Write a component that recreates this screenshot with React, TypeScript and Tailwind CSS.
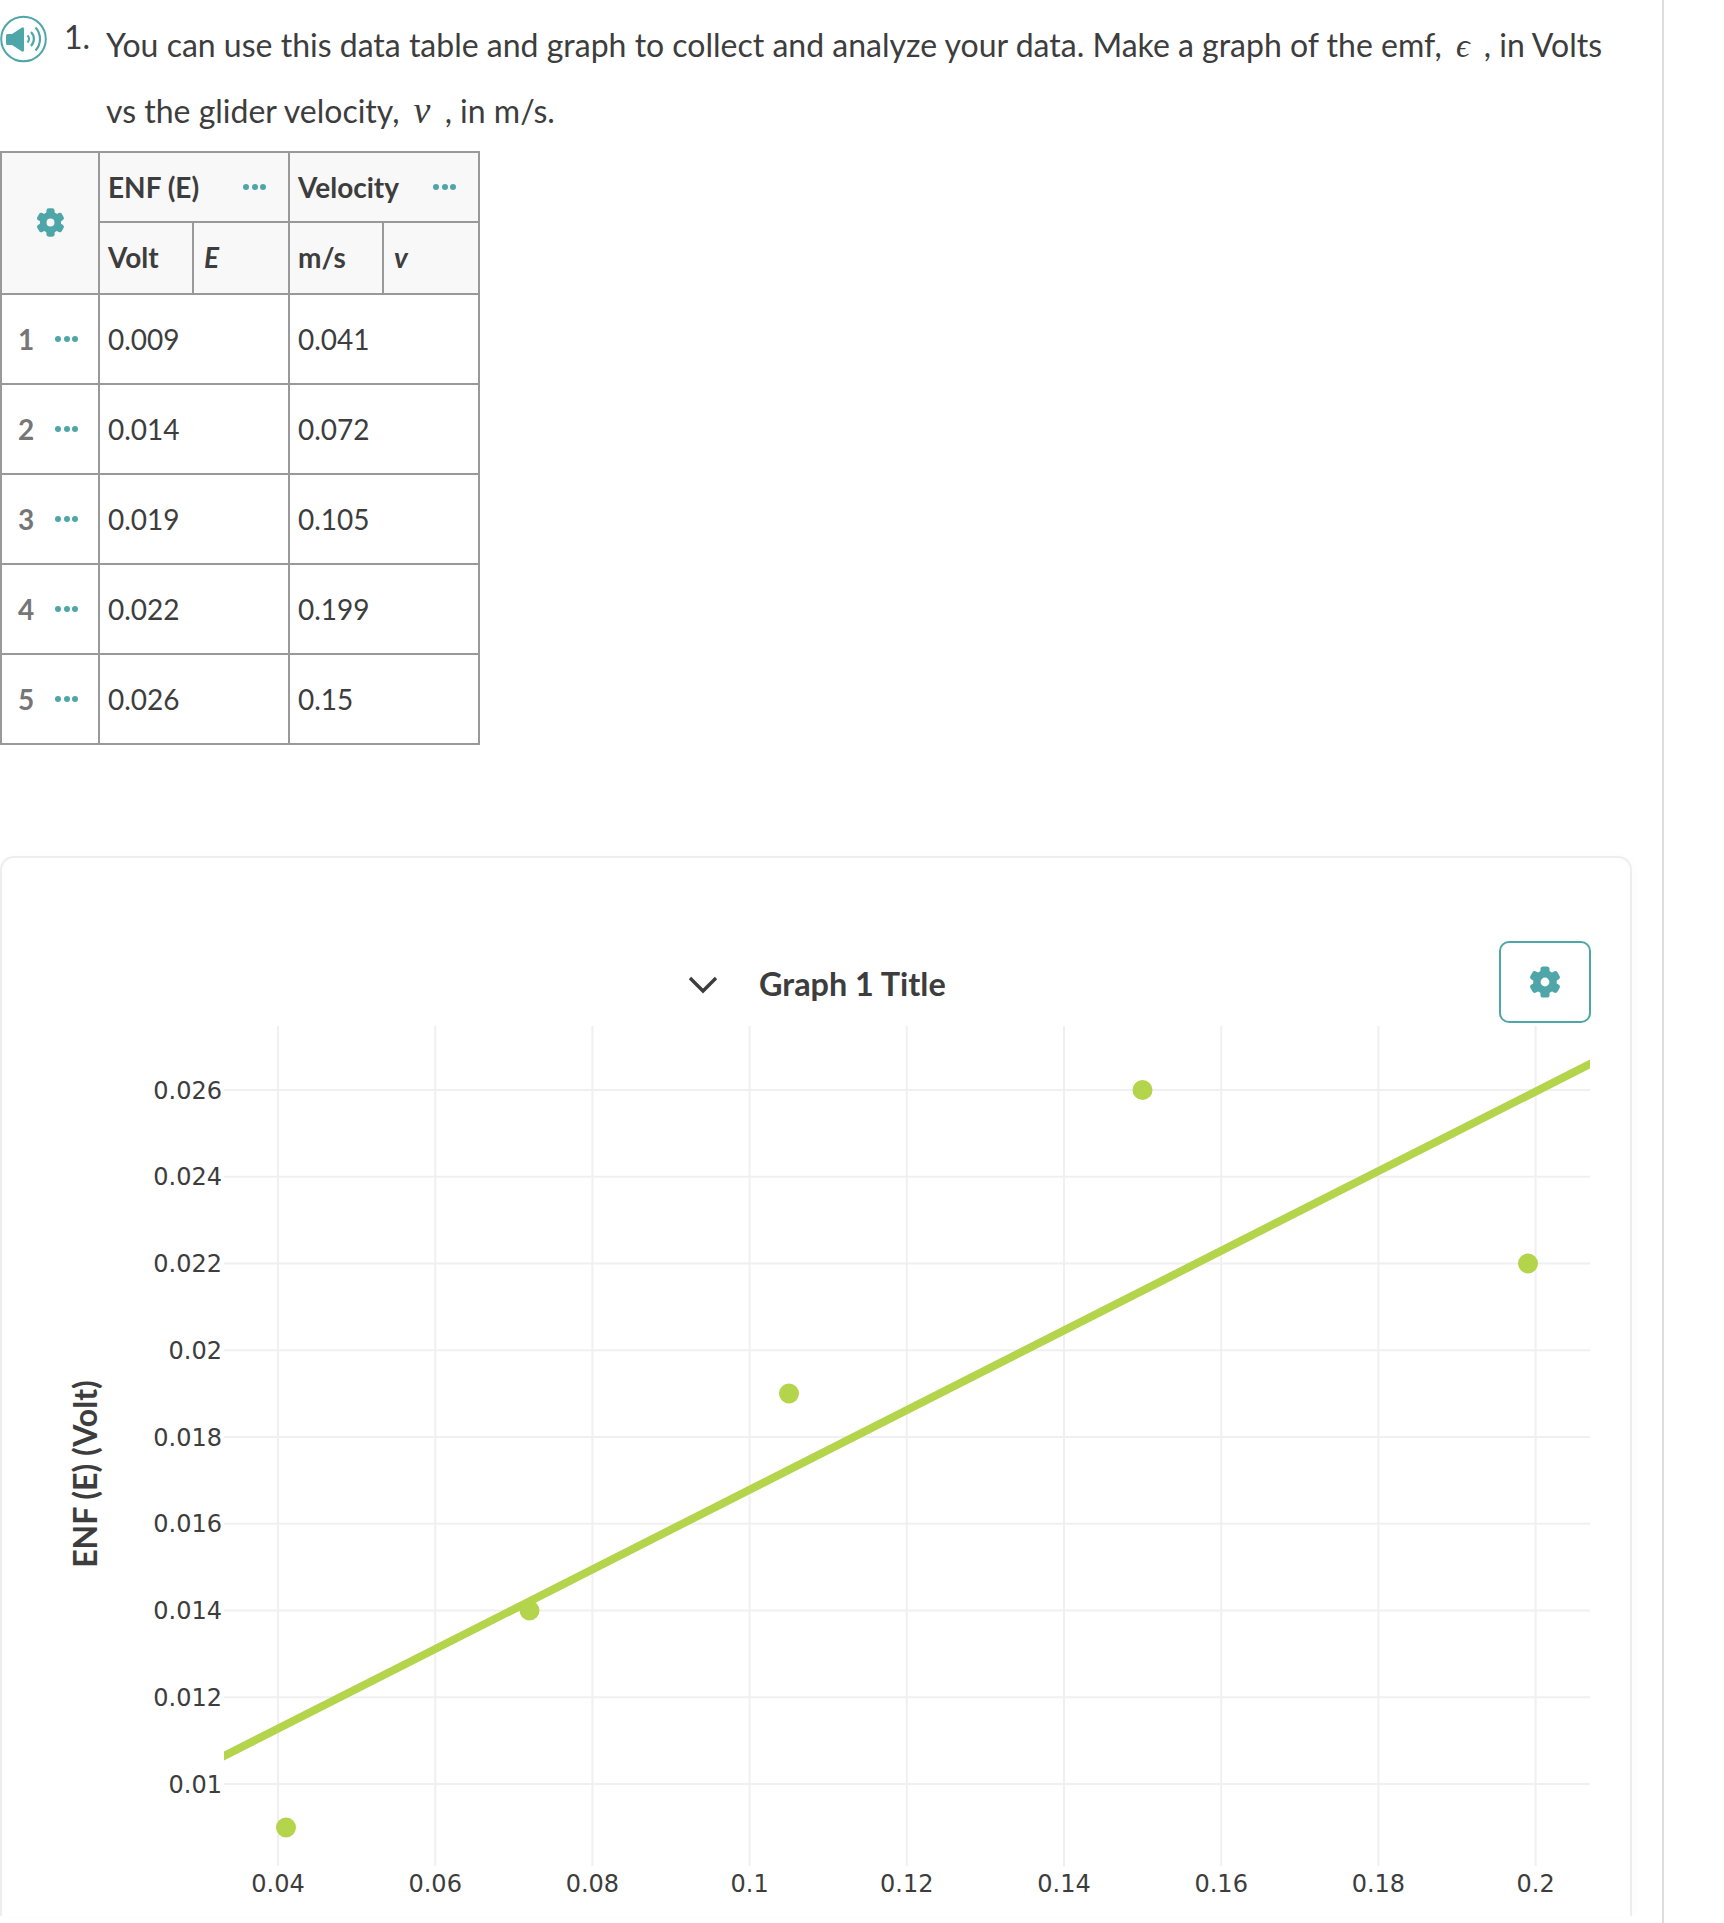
import React from "react";

const teal = "#4fa6a8";
const ink = "#3d3d3d";
const lime = "#b3d44b";

function Gear({ size }: { size: number }) {
  const teeth = [0, 60, 120, 180, 240, 300];
  return (
    <svg width={size} height={size} viewBox="0 0 24 24" className="block">
      <g fill={teal}>
        {teeth.map((a) => (
          <rect key={a} x="8.6" y="0.3" width="6.8" height="7" rx="2" transform={`rotate(${a} 12 12)`} />
        ))}
        <path fillRule="evenodd" d="M12 3.2a8.8 8.8 0 1 0 0 17.6a8.8 8.8 0 1 0 0-17.6zM12 8.7a3.3 3.3 0 1 1 0 6.6a3.3 3.3 0 1 1 0-6.6z" />
      </g>
    </svg>
  );
}

function Dots() {
  return (
    <span className="flex gap-[2.5px]">
      <span className="h-[6px] w-[6px] rounded-full bg-[#4fa6a8]" />
      <span className="h-[6px] w-[6px] rounded-full bg-[#4fa6a8]" />
      <span className="h-[6px] w-[6px] rounded-full bg-[#4fa6a8]" />
    </span>
  );
}

function Speaker() {
  return (
    <svg width="48" height="48" viewBox="0 0 48 48" className="block">
      <circle cx="23.5" cy="24" r="22.3" fill="none" stroke={teal} strokeWidth="2" />
      <path d="M6 20.5q0-1.5 1.5-1.5H12L22 12.5q2-1 2 1.5v21q0 2.5-2 1.500L12 30H7.500q-1.500 0-1.500-1.500z" fill={teal} />
      <g fill="none" stroke={teal} strokeWidth="2.2">
        <path d="M27.500 20.500a5 5 0 0 1 0 7" />
        <path d="M31 17a10 10 0 0 1 0 14" />
        <path d="M35.500 12.500a17 17 0 0 1 0 23" />
      </g>
    </svg>
  );
}

const rows = [
  ["1", "0.009", "0.041"],
  ["2", "0.014", "0.072"],
  ["3", "0.019", "0.105"],
  ["4", "0.022", "0.199"],
  ["5", "0.026", "0.15"],
];

const gridX = [
  ["0.04", 278], ["0.06", 435.2], ["0.08", 592.4], ["0.1", 749.6], ["0.12", 906.8],
  ["0.14", 1064], ["0.16", 1221.2], ["0.18", 1378.4], ["0.2", 1535.6],
] as const;
const gridY = [
  ["0.026", 1089], ["0.024", 1175.75], ["0.022", 1262.5], ["0.02", 1349.25], ["0.018", 1436],
  ["0.016", 1522.75], ["0.014", 1609.5], ["0.012", 1696.25], ["0.01", 1783],
] as const;
const pts = [
  [286, 1826.5], [529.5, 1609.5], [789, 1392.5], [1142.5, 1089], [1528, 1262.5],
];

function Plot() {
  return (
    <svg width="1628" height="905" viewBox="2 1010 1628 905" className="block">
      <defs>
        <clipPath id="plot-area">
          <rect x="224" y="1025" width="1366" height="840" />
        </clipPath>
      </defs>
      {gridX.map(([l, x]) => (
        <line key={l} x1={x} x2={x} y1="1025" y2="1865" stroke="#f0f0f0" strokeWidth="2" />
      ))}
      {gridY.map(([l, y]) => (
        <line key={l} x1="224" x2="1590" y1={y} y2={y} stroke="#f0f0f0" strokeWidth="2" />
      ))}
      <line x1="200" y1="1767.2" x2="1614" y2="1050.8" stroke={lime} strokeWidth="8" clipPath="url(#plot-area)" />
      {pts.map(([x, y]) => (
        <circle key={x} cx={x} cy={y} r="10" fill={lime} />
      ))}
      <g fontFamily="'DejaVu Sans', sans-serif" fontSize="24" fill={ink}>
        {gridX.map(([l, x]) => (
          <text key={l} x={x} y="1891" textAnchor="middle">{l}</text>
        ))}
        {gridY.map(([l, y]) => (
          <text key={l} x="222" y={y + 8.5} textAnchor="end">{l}</text>
        ))}
      </g>
      <text
        x="0"
        y="0"
        transform="translate(97 1473) rotate(-90)"
        textAnchor="middle"
        fontFamily="Lato, sans-serif"
        fontWeight="700"
        fontSize="32"
        fill={ink}
      >
        ENF (E) (Volt)
      </text>
    </svg>
  );
}

export default function App() {
  return (
    <div className="h-[1923px] w-[1724px] overflow-hidden bg-white text-[#3d3d3d] font-['Lato',sans-serif]">
      <div className="h-full w-[1664px] border-r-2 border-[#dddddd]">
        <div className="flex h-[151px] items-start">
          <div className="mt-[15px] w-[64px] shrink-0"><Speaker /></div>
          <div className="mt-[17px] w-[42px] shrink-0 text-[32px] leading-[40px]">1.</div>
          <p className="mt-[12px] w-[1520px] text-[32px] leading-[66px] whitespace-pre-wrap">
            You can use this data table and graph to collect and analyze your data. Make a graph of the emf,{" "}
            <span className="mx-[6px] font-['Liberation_Serif',serif] text-[34px] leading-none italic">ϵ</span> , in Volts
            <br />
            vs the glider velocity, <span className="mx-[6px] font-['Liberation_Serif',serif] text-[38px] leading-none italic">v</span> , in m/s.
          </p>
        </div>

        <table className="w-[478px] table-fixed border-collapse text-[28px]">
          <colgroup>
            <col className="w-[98px]" />
            <col className="w-[94px]" />
            <col className="w-[96px]" />
            <col className="w-[94px]" />
            <col className="w-[96px]" />
          </colgroup>
          <thead className="bg-[#f8f8f8] font-bold">
            <tr className="h-[70px]">
              <th rowSpan={2} className="border-2 border-[#999999] pb-[2px] font-normal">
                <div className="flex justify-center"><Gear size={29} /></div>
              </th>
              <th colSpan={2} className="border-2 border-[#999999] pb-[1px] pl-[8px] pr-[22px] font-bold">
                <div className="flex items-center justify-between"><span>ENF (E)</span><Dots /></div>
              </th>
              <th colSpan={2} className="border-2 border-[#999999] pb-[1px] pl-[8px] pr-[22px] font-bold">
                <div className="flex items-center justify-between"><span>Velocity</span><Dots /></div>
              </th>
            </tr>
            <tr className="h-[72px]">
              <th className="border-2 border-[#999999] pb-[3px] pl-[8px] text-left font-bold">Volt</th>
              <th className="border-2 border-[#999999] pb-[3px] pl-[10px] text-left font-bold italic">E</th>
              <th className="border-2 border-[#999999] pb-[3px] pl-[8px] text-left font-bold">m/s</th>
              <th className="border-2 border-[#999999] pb-[3px] pl-[10px] text-left font-bold italic">v</th>
            </tr>
          </thead>
          <tbody>
            {rows.map(([n, a, b]) => (
              <tr key={n} className="h-[90px]">
                <td className="border-2 border-[#999999] pl-[16px] pr-[20px]">
                  <div className="flex items-center justify-between">
                    <span className="font-bold text-[#767676]">{n}</span>
                    <Dots />
                  </div>
                </td>
                <td colSpan={2} className="border-2 border-[#999999] pb-[1px] pl-[8px]">{a}</td>
                <td colSpan={2} className="border-2 border-[#999999] pb-[1px] pl-[8px]">{b}</td>
              </tr>
            ))}
          </tbody>
        </table>

        <div className="mt-[111px] w-[1632px] rounded-t-[14px] border-2 border-b-0 border-[#eeeeee] shadow-[2px_0_8px_rgba(0,0,0,0.02)]">
          <div className="relative h-[153px]">
            <div className="absolute left-[686px] top-[110px] flex items-center gap-[41px]">
              <svg width="30" height="18" viewBox="0 0 30 18" className="block">
                <path d="M2 2l13 13L28 2" fill="none" stroke={ink} strokeWidth="3.4" />
              </svg>
              <span className="-mt-[2px] text-[32.4px] font-bold leading-[36px]">Graph 1 Title</span>
            </div>
            <button className="absolute left-[1497px] top-[83px] flex h-[82px] w-[92px] items-center justify-center rounded-[10px] border-2 border-[#4fa6a8] bg-white">
              <Gear size={32} />
            </button>
          </div>
          <Plot />
        </div>
      </div>
    </div>
  );
}
